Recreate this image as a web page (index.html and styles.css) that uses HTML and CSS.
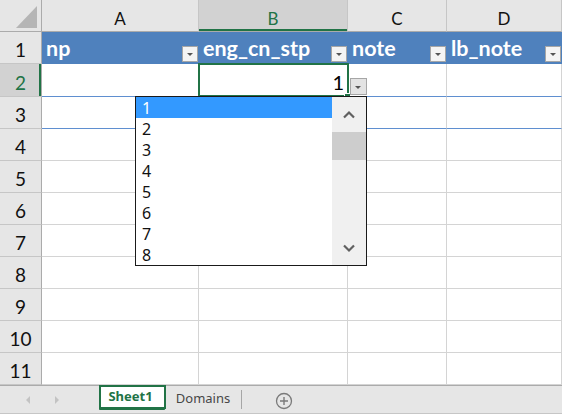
FILE: index.html
```html
<!DOCTYPE html>
<html>
<head>
<meta charset="utf-8">
<link rel="stylesheet" href="styles.css">
</head>
<body>
<div class="app">
  <div class="sheet">
    <div class="corner"><svg width="42" height="32" viewBox="0 0 42 32"><polygon points="37,6 37,28 16,28" fill="#b5b5b5"/></svg></div>
    <div class="ch">A</div>
    <div class="ch sel">B</div>
    <div class="ch">C</div>
    <div class="ch">D</div>

    <div class="rh">1</div>
    <div class="th"><span class="tt">np</span><span class="fb"><svg width="14" height="14" viewBox="0 0 14 14"><polygon points="4,6 10,6 7,9" fill="#555"/></svg></span></div>
    <div class="th"><span class="tt">eng_cn_stp</span><span class="fb"><svg width="14" height="14" viewBox="0 0 14 14"><polygon points="4,6 10,6 7,9" fill="#555"/></svg></span></div>
    <div class="th"><span class="tt">note</span><span class="fb"><svg width="14" height="14" viewBox="0 0 14 14"><polygon points="4,6 10,6 7,9" fill="#555"/></svg></span></div>
    <div class="th"><span class="tt">lb_note</span><span class="fb"><svg width="14" height="14" viewBox="0 0 14 14"><polygon points="4,6 10,6 7,9" fill="#555"/></svg></span></div>

    <div class="rh sel">2</div>
    <div class="cell tbl"></div>
    <div class="cell tbl active"><span class="val">1</span><span class="fh"></span><span class="dv"><svg width="15" height="15" viewBox="0 0 15 15"><polygon points="4,7 10,7 7,10" fill="#555"/></svg></span></div>
    <div class="cell tbl"></div>
    <div class="cell tbl"></div>

    <div class="rh">3</div>
    <div class="cell tbl"></div><div class="cell tbl"></div><div class="cell tbl"></div><div class="cell tbl"></div>

    <div class="rh">4</div>
    <div class="cell"></div><div class="cell"></div><div class="cell"></div><div class="cell"></div>
    <div class="rh">5</div>
    <div class="cell"></div><div class="cell"></div><div class="cell"></div><div class="cell"></div>
    <div class="rh">6</div>
    <div class="cell"></div><div class="cell"></div><div class="cell"></div><div class="cell"></div>
    <div class="rh">7</div>
    <div class="cell"></div><div class="cell"></div><div class="cell"></div><div class="cell"></div>
    <div class="rh">8</div>
    <div class="cell"></div><div class="cell"></div><div class="cell"></div><div class="cell"></div>
    <div class="rh">9</div>
    <div class="cell"></div><div class="cell"></div><div class="cell"></div><div class="cell"></div>
    <div class="rh">10</div>
    <div class="cell"></div><div class="cell"></div><div class="cell"></div><div class="cell"></div>
    <div class="rh">11</div>
    <div class="cell"></div><div class="cell"></div><div class="cell"></div><div class="cell"></div>
  </div>

  <div class="tabs">
    <div class="nav">
      <svg width="8" height="10" viewBox="0 0 8 10"><polygon points="6,1 6,9 2,5" fill="#c3c3c3"/></svg>
      <svg width="8" height="10" viewBox="0 0 8 10"><polygon points="2,1 2,9 6,5" fill="#c3c3c3"/></svg>
    </div>
    <div class="tab active">Sheet1</div>
    <div class="tab">Domains</div>
    <div class="sep"></div>
    <div class="add"><svg width="18" height="18" viewBox="0 0 18 18"><circle cx="9" cy="9" r="7.5" fill="none" stroke="#7a7a7a" stroke-width="1.3"/><path d="M9 5v8M5 9h8" stroke="#7a7a7a" stroke-width="1.4"/></svg></div>
  </div>

  <div class="dd">
    <div class="list">
      <div class="item hl">1</div>
      <div class="item">2</div>
      <div class="item">3</div>
      <div class="item">4</div>
      <div class="item">5</div>
      <div class="item">6</div>
      <div class="item">7</div>
      <div class="item">8</div>
    </div>
    <div class="sb">
      <div class="sbtn"><svg width="14" height="10" viewBox="0 0 14 10"><path d="M2 7.5L7 2.5L12 7.5" fill="none" stroke="#606060" stroke-width="2.2"/></svg></div>
      <div class="thumb"></div>
      <div class="track"></div>
      <div class="sbtn"><svg width="14" height="10" viewBox="0 0 14 10"><path d="M2 2.5L7 7.5L12 2.5" fill="none" stroke="#606060" stroke-width="2.2"/></svg></div>
    </div>
  </div>
</div>
</body>
</html>
```
FILE: styles.css
```css
* { box-sizing: border-box; }
body {
  margin: 0;
  width: 562px;
  height: 416px;
  overflow: hidden;
  background: #fff;
  font-family: Lato, "Liberation Sans", sans-serif;
}
.app {
  position: relative;
  width: 562px;
  height: 416px;
}
.sheet {
  display: grid;
  grid-template-columns: 42px 157px 149px 99px 115px;
  grid-template-rows: 32px 32px 33px repeat(9, 32px);
}
.corner {
  background: #e6e6e6;
  border-right: 1px solid #ababab;
  border-bottom: 1px solid #ababab;
  overflow: hidden;
}
.corner svg { display: block; }
.ch {
  background: #e6e6e6;
  border-right: 1px solid #c6c6c6;
  border-bottom: 1px solid #ababab;
  display: flex;
  align-items: flex-end;
  justify-content: center;
  padding-bottom: 4px;
  font-size: 17px;
  line-height: 17px;
  color: #111;
}
.ch.sel {
  background: #d2d2d2;
  color: #217346;
  box-shadow: inset 0 -2px 0 #217346;
}
.rh {
  background: #e6e6e6;
  border-right: 1px solid #ababab;
  border-bottom: 1px solid #c6c6c6;
  display: flex;
  align-items: flex-end;
  justify-content: center;
  padding-bottom: 4px;
  font-size: 19px;
  line-height: 19px;
  color: #111;
}
.rh.sel {
  background: #d2d2d2;
  color: #217346;
  box-shadow: inset -2px 0 0 #217346;
}
.th {
  background: #4f81bd;
  color: #fff;
  display: flex;
  align-items: flex-end;
  justify-content: space-between;
  padding: 0 1px 2px 4px;
}
.tt {
  font-weight: bold;
  font-size: 21.5px;
  line-height: 21px;
  margin-bottom: 3px;
}
.fb {
  width: 16px;
  height: 16px;
  border: 1px solid #a6a6a6;
  background: #f4f4f4;
  display: flex;
  align-items: center;
  justify-content: center;
}
.fb svg { display: block; }
.cell {
  border-right: 1px solid #d4d4d4;
  border-bottom: 1px solid #d4d4d4;
}
.cell.tbl { border-bottom-color: #5f8fd0; }
.active {
  position: relative;
  display: flex;
  align-items: flex-end;
  justify-content: flex-end;
  padding: 0 3px 4px 0;
}
.active::after {
  content: "";
  position: absolute;
  left: -1px;
  top: -1px;
  right: -2px;
  bottom: -1px;
  border: 2px solid #217346;
  pointer-events: none;
}
.val {
  font-size: 20px;
  line-height: 20px;
  color: #000;
}
.fh {
  position: absolute;
  right: -4px;
  bottom: -4px;
  width: 7px;
  height: 7px;
  background: #217346;
  border: 1px solid #fff;
  z-index: 2;
}
.dv {
  position: absolute;
  left: 151px;
  bottom: 1px;
  width: 17px;
  height: 17px;
  border: 1px solid #a6a6a6;
  background: #e3e3e3;
  display: flex;
  align-items: center;
  justify-content: center;
  z-index: 3;
}
.dv svg { display: block; }

.tabs {
  height: 29px;
  background: #e6e6e6;
  border-top: 1px solid #ababab;
  border-bottom: 1px solid #c6c6c6;
  display: flex;
  align-items: flex-start;
  font-family: "Noto Sans", "Open Sans", sans-serif;
  font-size: 13px;
}
.nav {
  width: 99px;
  height: 27px;
  display: flex;
  align-items: center;
  gap: 21px;
  padding-left: 24px;
  padding-top: 1px;
}
.nav svg { display: block; }
.tab {
  height: 24px;
  display: flex;
  align-items: center;
  justify-content: center;
  color: #474747;
  width: 76px;
}
.tab.active {
  width: 66px;
  background: #fff;
  border-left: 1px solid #c8c8c8;
  border-right: 1px solid #c8c8c8;
  border-bottom: 2px solid #217346;
  color: #217346;
  font-weight: bold;
  padding-top: 1px;
}
.sep {
  width: 1px;
  height: 19px;
  margin-top: 4px;
  background: #a6a6a6;
}
.add {
  margin-left: 33px;
  margin-top: 6px;
}
.add svg { display: block; }

.dd {
  position: absolute;
  left: 135px;
  top: 96px;
  width: 232px;
  height: 170px;
  border: 1px solid #1a1a1a;
  background: #fff;
  display: flex;
  z-index: 5;
}
.list {
  flex: 1;
  font-family: "Noto Sans", "Open Sans", sans-serif;
  font-size: 16px;
  color: #111;
  overflow: hidden;
}
.item {
  height: 21px;
  line-height: 22px;
  padding-left: 6px;
}
.item.hl {
  background: #3399ff;
  color: #fff;
}
.sb {
  width: 34px;
  background: #f0f0f0;
  display: flex;
  flex-direction: column;
}
.sbtn {
  height: 35px;
  display: flex;
  align-items: center;
  justify-content: center;
}
.sbtn svg { display: block; }
.thumb {
  height: 28px;
  background: #cdcdcd;
}
.track { flex: 1; }
```
